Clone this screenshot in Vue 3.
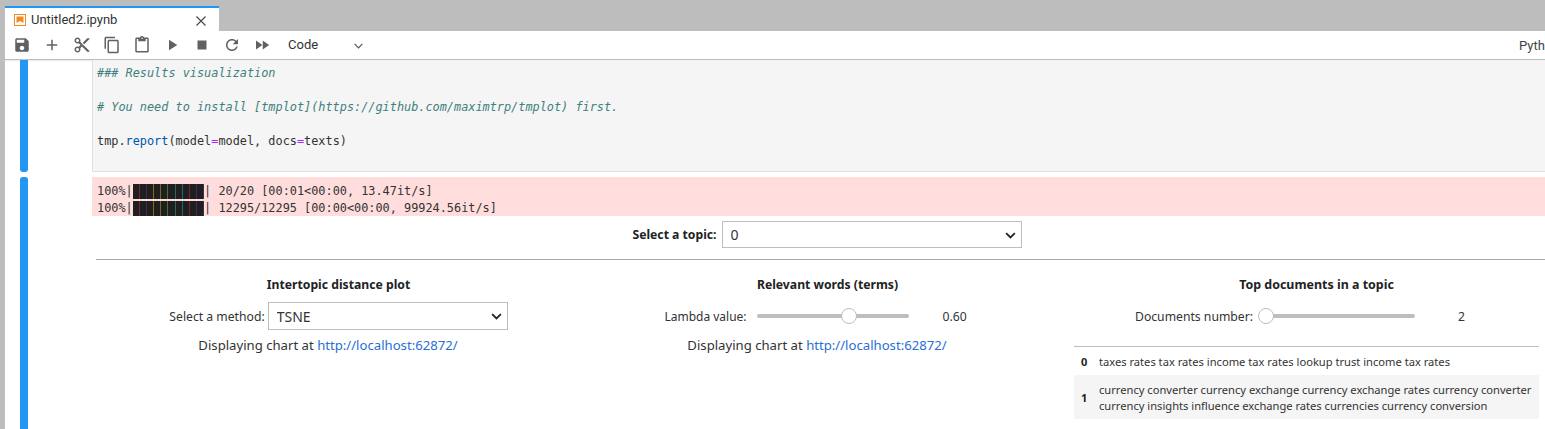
<script setup>
const seams = ['#7a2342','#452859','#8a661e','#676b26','#477036','#236b5a','#1d6c75','#7a2336','#53245a','#2f2f5a']
const icons = [
  'M17 3H5c-1.11 0-2 .9-2 2v14c0 1.1.89 2 2 2h14c1.1 0 2-.9 2-2V7l-4-4zm-5 16c-1.66 0-3-1.34-3-3s1.34-3 3-3 3 1.34 3 3-1.34 3-3 3zm3-10H5V5h10v4z',
  'M19 13h-6v6h-2v-6H5v-2h6V5h2v6h6v2z',
  'M9.64 7.64c.23-.5.36-1.05.36-1.64 0-2.21-1.79-4-4-4S2 3.79 2 6s1.79 4 4 4c.59 0 1.14-.13 1.64-.36L10 12l-2.36 2.36C7.14 14.13 6.59 14 6 14c-2.21 0-4 1.79-4 4s1.79 4 4 4 4-1.79 4-4c0-.59-.13-1.14-.36-1.64L12 14l7 7h3v-1L9.64 7.64zM6 8c-1.1 0-2-.89-2-2s.9-2 2-2 2 .89 2 2-.9 2-2 2zm0 12c-1.1 0-2-.89-2-2s.9-2 2-2 2 .89 2 2-.9 2-2 2zm6-7.5c-.28 0-.5-.22-.5-.5s.22-.5.5-.5.5.22.5.5-.22.5-.5.5zM19 3l-6 6 2 2 7-7V3z',
  'M16 1H4c-1.1 0-2 .9-2 2v14h2V3h12V1zm3 4H8c-1.1 0-2 .9-2 2v14c0 1.1.9 2 2 2h11c1.1 0 2-.9 2-2V7c0-1.1-.9-2-2-2zm0 16H8V7h11v14z',
  'M19 2h-4.18C14.4.84 13.3 0 12 0c-1.3 0-2.4.84-2.82 2H5c-1.1 0-2 .9-2 2v16c0 1.1.9 2 2 2h14c1.1 0 2-.9 2-2V4c0-1.1-.9-2-2-2zm-7 0c.55 0 1 .45 1 1s-.45 1-1 1-1-.45-1-1 .45-1 1-1zm7 18H5V4h2v3h10V4h2v16z',
  'M8 5v14l11-7z',
  'M6 6h12v12H6z',
  'M17.65 6.35C16.2 4.9 14.21 4 12 4c-4.42 0-7.99 3.58-7.99 8s3.57 8 7.99 8c3.73 0 6.84-2.55 7.73-6h-2.08c-.82 2.33-3.04 4-5.65 4-3.31 0-6-2.69-6-6s2.69-6 6-6c1.66 0 3.14.69 4.22 1.78L13 11h7V4l-2.35 2.35z',
  'M4 18l8.5-6L4 6v12zm9-12v12l8.5-6L13 6z',
]
</script>

<template>
  <div class="page">
    <div class="tabbar">
      <div class="tab">
        <svg class="nbicon" viewBox="0 0 12 12" width="12" height="12">
          <rect x="0.5" y="0.5" width="11" height="11" fill="#fff" stroke="#ef8b22" />
          <path d="M2.5 2.5h7v6.5L6 7 2.5 9z" fill="#ef8b22" />
        </svg>
        <span class="tabname">Untitled2.ipynb</span>
        <svg class="close" viewBox="0 0 10 10" width="10" height="10">
          <path d="M.5.5l9 9M9.5.5l-9 9" stroke="#444" stroke-width="1.1" fill="none" />
        </svg>
      </div>
    </div>

    <div class="toolbar">
      <div class="icons">
        <span v-for="(d, i) in icons" :key="i" class="tbtn">
          <svg viewBox="0 0 24 24" width="18" height="18"><path :d="d" fill="#616161" /></svg>
        </span>
      </div>
      <div class="celltype">
        <span>Code</span>
        <svg viewBox="0 0 10 6" width="9" height="6"><path d="M.7.7L5 5l4.3-4.3" stroke="#555" stroke-width="1.3" fill="none" /></svg>
      </div>
      <span class="kernel">Python 3</span>
    </div>

    <div class="cell cell-in">
      <div class="collapser first"></div>
      <div class="editor">
        <pre class="code"><span class="cm">### Results visualization</span>

<span class="cm"># You need to install [tmplot](https://github.com/maximtrp/tmplot) first.</span>

tmp.<span class="fn">report</span>(model<span class="op">=</span>model, docs<span class="op">=</span>texts)</pre>
      </div>
    </div>

    <div class="cell cell-out">
      <div class="collapser second"></div>
      <div class="output">
        <div class="stderr">
          <div class="ln">100%|<span v-for="(c, i) in seams" :key="i" class="blk" :style="{ borderRightColor: c }">█</span>| 20/20 [00:01&lt;00:00, 13.47it/s]</div>
          <div class="ln">100%|<span v-for="(c, i) in seams" :key="i" class="blk" :style="{ borderRightColor: c }">█</span>| 12295/12295 [00:00&lt;00:00, 99924.56it/s]</div>
        </div>
        <div class="widget">
          <div class="topic-row">
            <label class="b">Select a topic:</label>
            <div class="selwrap topic">
              <select><option>0</option></select>
              <svg viewBox="0 0 12 8" width="11" height="7"><path d="M1 1.2l5 5 5-5" stroke="#222" stroke-width="2" fill="none" /></svg>
            </div>
          </div>
          <div class="rule"></div>
          <div class="cols">
            <div class="col">
              <div class="title">Intertopic distance plot</div>
              <div class="ctl">
                <label>Select a method:</label>
                <div class="selwrap method">
                  <select><option>TSNE</option></select>
                  <svg viewBox="0 0 12 8" width="11" height="7"><path d="M1 1.2l5 5 5-5" stroke="#222" stroke-width="2" fill="none" /></svg>
                </div>
              </div>
              <div class="disp">Displaying chart at <a>http://localhost:62872/</a></div>
            </div>
            <div class="col">
              <div class="title">Relevant words (terms)</div>
              <div class="ctl ctl-l">
                <label class="lbl">Lambda value:</label>
                <div class="slider s1"><i class="thumb t1"></i></div>
                <span class="val v1">0.60</span>
              </div>
              <div class="disp">Displaying chart at <a>http://localhost:62872/</a></div>
            </div>
            <div class="col">
              <div class="title wide">Top documents in a topic</div>
              <div class="ctl ctl-d">
                <label>Documents number:</label>
                <div class="slider s2"><i class="thumb t2"></i></div>
                <span class="val v2">2</span>
              </div>
              <div class="docs">
                <div class="doc">
                  <b>0</b>
                  <span>taxes rates tax rates income tax rates lookup trust income tax rates</span>
                </div>
                <div class="doc alt">
                  <b>1</b>
                  <span>currency converter currency exchange currency exchange rates currency converter currency insights influence exchange rates currencies currency conversion</span>
                </div>
              </div>
            </div>
          </div>
        </div>
      </div>
    </div>
  </div>
</template>

<style>
html, body { margin: 0; background: #fff; overflow: hidden; }
</style>

<style scoped>
.page {
  width: 1545px; height: 429px; overflow: hidden; box-sizing: border-box;
  border-left: 5px solid #bdbdbd; background: #fff;
  font-family: "Noto Sans", "Open Sans", sans-serif; color: #333; font-size: 12px;
}
.tabbar { height: 31px; background: #bdbdbd; padding-top: 6px; box-sizing: border-box; }
.tab {
  width: 214px; height: 25px; background: #fff; border-top: 2px solid #2196f3; box-sizing: border-box;
  display: flex; align-items: center; padding-left: 9px;
}
.nbicon { margin-top: 1px; }
.tabname { margin-left: 5px; font-family: Roboto, sans-serif; font-size: 13px; color: #333; width: 165px; }
.close { margin-top: 2px; }
.toolbar {
  height: 29px; box-sizing: border-box; background: #fff; border-bottom: 1px solid #bdbdbd;
  box-shadow: 0 1px 1px rgba(0,0,0,.08);
  display: flex; align-items: center; overflow: hidden; padding-left: 2px;
}
.icons { display: flex; }
.tbtn { width: 30px; height: 28px; display: flex; align-items: center; justify-content: center; }
.celltype {
  margin-left: 11px; width: 75px; display: flex; justify-content: space-between; align-items: center;
  font-family: Roboto, sans-serif; font-size: 13px; color: #333; padding-bottom: 2px;
}
.celltype svg { margin-top: 3px; }
.kernel {
  margin-left: auto; width: 26px; font-family: Roboto, sans-serif; font-size: 13px;
  color: #444; white-space: nowrap;
}
.cell { display: flex; }
.cell-in { height: 112px; }
.cell-out { margin-top: 5px; height: 253px; }
.collapser { width: 8px; margin-left: 15px; background: #2196f3; flex: none; }
.collapser.first { border-radius: 0 0 3px 3px; height: 112px; }
.collapser.second { border-radius: 3px 3px 0 0; }
.editor {
  margin-left: 64px; flex: 1; background: #f5f5f5; border: 1px solid #e0e0e0; border-top: 0; border-right: 0;
  height: 112px; box-sizing: border-box; padding: 5px 0 0 4px;
}
.code {
  margin: 0; font-family: "DejaVu Sans Mono", monospace; font-size: 11.87px; line-height: 17px; color: #333;
}
.cm { color: #408080; font-style: italic; }
.fn { color: #05a; }
.op { color: #a2f; }
.output { margin-left: 64px; flex: 1; min-width: 0; }
.stderr {
  height: 39px; background: #fdd; box-sizing: border-box; padding: 6px 0 0 5px;
  font-family: "DejaVu Sans Mono", monospace; font-size: 11.87px; line-height: 17px; color: #333; white-space: pre;
}
.ln { height: 17px; }
.blk {
  display: inline-block; width: 7.15px; height: 15px; box-sizing: border-box; background: #1f1f1f; color: #1f1f1f;
  border-right: 1px solid; vertical-align: top; overflow: hidden; line-height: 15px; margin-top: 1px;
}
.widget { width: 1470px; }
.topic-row { display: flex; justify-content: center; align-items: center; gap: 5px; padding-top: 5px; height: 27px; }
label { font-size: 12.2px; color: #333; }
.b { font-weight: 700; color: #222; }
.selwrap { position: relative; height: 28px; }
.selwrap select {
  appearance: none; width: 100%; height: 100%; box-sizing: border-box; background: #fff; border: 1px solid #bdbdbd;
  border-radius: 0; padding: 0 8px; font-family: "Noto Sans", sans-serif; font-size: 14px; color: #333; outline: none;
}
.selwrap svg { position: absolute; right: 6px; top: 11px; pointer-events: none; }
.topic { width: 300px; height: 27px; }
.method { width: 240px; }
.rule { height: 1px; background: #aaa; margin: 11px 0 0 4px; }
.cols { display: flex; margin-left: 2px; }
.col { width: 489px; flex: none; display: flex; flex-direction: column; align-items: center; }
.title { font-weight: 700; font-size: 12.2px; color: #222; margin-top: 16px; line-height: 17px; }
.title.wide { font-size: 12.45px; }
.ctl { display: flex; align-items: center; gap: 3px; height: 28px; margin-top: 9px; }
.ctl-l { margin-right: 24px; }
.ctl-d { margin-right: 32px; }
.disp { margin-top: 6px; margin-right: 21px; font-size: 13.15px; line-height: 18px; color: #333; }
.disp a { color: #2a6fd6; }
.lbl { font-size: 12px; }
.slider { position: relative; height: 4px; background: #bdbdbd; border-radius: 2px; width: 152px; }
.s1 { margin-left: 7px; }
.s2 { margin-left: 10px; width: 149px; }
.thumb {
  position: absolute; top: -6px; width: 16px; height: 16px; box-sizing: border-box; border-radius: 50%;
  background: #fff; border: 1px solid #bdbdbd;
}
.t1 { left: 84px; }
.t2 { left: -8px; }
.val { font-size: 12.2px; }
.v1 { margin-left: 31px; width: 24px; }
.v2 { margin-left: 40px; width: 8px; }
.docs { align-self: flex-start; margin: 16px 0 0 2px; width: 465px; border-top: 1px solid #bdbdbd; }
.doc { display: flex; align-items: center; font-size: 11.15px; line-height: 16px; padding: 7px 0 5px; color: #333; }
.doc b { width: 18px; padding-left: 7px; flex: none; color: #222; font-size: 11px; }
.doc.alt { background: #f5f5f5; }
</style>
